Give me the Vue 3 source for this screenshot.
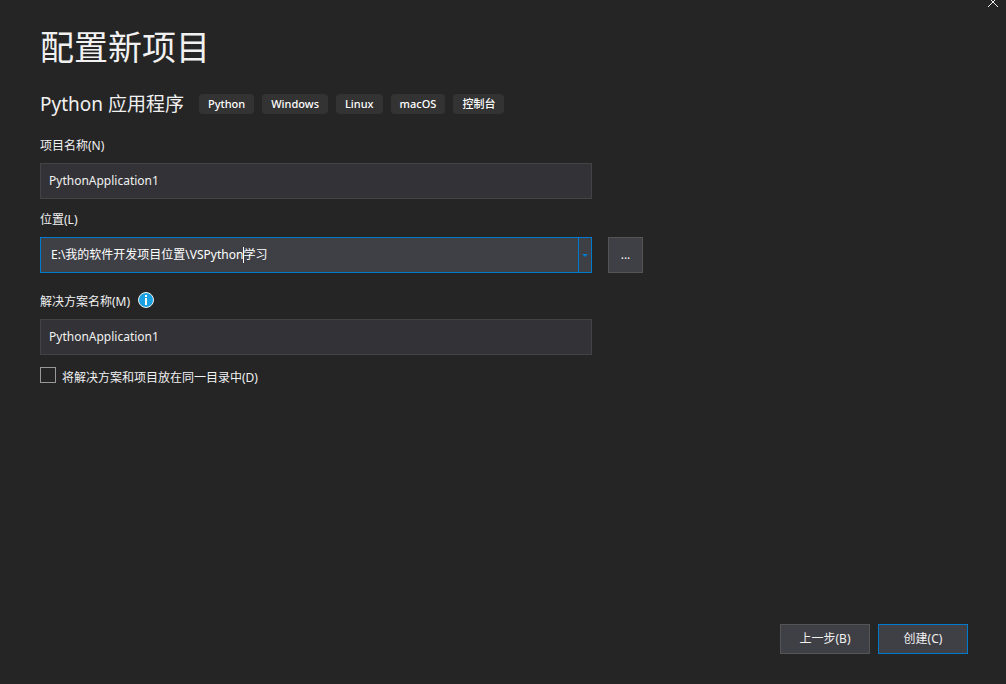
<template>
  <div class="dialog">
    <button class="close-button" type="button" aria-label="关闭">
      <svg width="12" height="12" viewBox="0 0 12 12">
        <path d="M1 1 L11 11 M11 1 L1 11" />
      </svg>
    </button>

    <header>
      <h1>配置新项目</h1>
      <div class="template-info">
        <h2>Python 应用程序</h2>
        <ul class="tags">
          <li v-for="tag in tags" :key="tag" class="tag">{{ tag }}</li>
        </ul>
      </div>
    </header>

    <form id="project-form" class="project-form" @submit.prevent>
      <div class="field">
        <label for="project-name">项目名称(N)</label>
        <input id="project-name" v-model="projectName" class="text-box" type="text" />
      </div>

      <div class="field">
        <label for="location">位置(L)</label>
        <div class="location-row">
          <div class="combo-box">
            <input
              id="location"
              ref="locationInput"
              v-model="location"
              type="text"
              spellcheck="false"
              @input="updateCaret"
              @click="updateCaret"
              @keyup="updateCaret"
              @focus="caretVisible = true"
              @blur="caretVisible = false"
            />
            <span v-show="caretVisible" class="caret" :style="{ left: caretLeft + 'px' }"></span>
            <button class="combo-toggle" type="button" aria-label="最近的位置">
              <svg width="6" height="3" viewBox="0 0 6 3">
                <path d="M0 0 H6 L3 3 Z" />
              </svg>
            </button>
          </div>
          <button class="browse-button" type="button">...</button>
        </div>
      </div>

      <div class="field solution-field">
        <div class="label-row">
          <label for="solution-name">解决方案名称(M)</label>
          <svg class="info-icon" width="16" height="16" viewBox="0 0 16 16">
            <circle cx="8" cy="8" r="7.5" />
            <path d="M7 3 H9 V5 H7 Z M7 6 H9 V13 H7 Z" />
          </svg>
        </div>
        <input id="solution-name" v-model="solutionName" class="text-box" type="text" />
      </div>

      <label class="check-row">
        <input v-model="sameDirectory" type="checkbox" />
        <span>将解决方案和项目放在同一目录中(D)</span>
      </label>
    </form>

    <footer class="actions">
      <button class="action-button" type="button">上一步(B)</button>
      <button class="action-button primary" type="submit" form="project-form">创建(C)</button>
    </footer>
  </div>
</template>

<script setup>
import { ref, onMounted } from 'vue'

const tags = ['Python', 'Windows', 'Linux', 'macOS', '控制台']

const projectName = ref('PythonApplication1')
const location = ref('E:\\我的软件开发项目位置\\VSPython学习')
const solutionName = ref('PythonApplication1')
const sameDirectory = ref(false)
const locationInput = ref(null)
const caretVisible = ref(true)
const caretLeft = ref(0)

// 根据光标前的文字宽度计算光标位置
const updateCaret = () => {
  const input = locationInput.value
  const style = getComputedStyle(input)
  const context = document.createElement('canvas').getContext('2d')
  context.font = `${style.fontSize} ${style.fontFamily}`
  const before = input.value.slice(0, input.selectionStart)
  caretLeft.value = Math.round(parseInt(style.paddingLeft) + context.measureText(before).width)
}

onMounted(() => {
  const position = location.value.indexOf('学习')
  locationInput.value.focus()
  locationInput.value.setSelectionRange(position, position)
  updateCaret()
})
</script>

<style>
body {
  background: #252526;
}
</style>

<style scoped>
.dialog {
  position: relative;
  display: flex;
  flex-direction: column;
  box-sizing: border-box;
  min-height: 100vh;
  padding: 23px 38px 30px 40px;
  overflow: hidden;
  background: #252526;
  color: #f1f1f1;
  font-family: "Noto Sans", "Noto Sans CJK SC", sans-serif;
  font-size: 12px;
  line-height: 20px;
}

input,
button {
  box-sizing: border-box;
  margin: 0;
  font: inherit;
  color: inherit;
  outline: none;
}

.close-button {
  position: absolute;
  top: -4px;
  right: 7px;
  display: flex;
  padding: 0;
  border: none;
  background: none;
}

.close-button path {
  stroke: #f1f1f1;
  fill: none;
}

h1 {
  margin: 0 0 19px;
  font-size: 34px;
  font-weight: 400;
  line-height: 48px;
}

.template-info {
  display: flex;
  align-items: center;
  gap: 15px;
}

h2 {
  margin: 0;
  font-size: 19px;
  font-weight: 400;
  line-height: 28px;
}

.tags {
  display: flex;
  gap: 8px;
  margin: 0;
  padding: 0;
  list-style: none;
}

.tag {
  padding: 0 9px;
  border-radius: 4px;
  background: #333334;
  color: #ffffff;
  font-size: 11px;
  font-weight: 500;
}

.project-form {
  display: flex;
  flex-direction: column;
  gap: 11px;
  margin-top: 18px;
}

.field {
  display: flex;
  flex-direction: column;
  gap: 7px;
}

.solution-field {
  margin-top: 8px;
}

.label-row {
  display: flex;
  align-items: flex-start;
  gap: 8px;
}

.info-icon circle {
  fill: #1ba1e2;
  stroke: #f1f1f1;
}

.info-icon path {
  fill: #ffffff;
}

.text-box {
  width: 100%;
  max-width: 552px;
  height: 36px;
  padding: 0 8px 2px;
  border: 1px solid #434346;
  background: #333337;
}

.location-row {
  display: flex;
  gap: 16px;
}

.combo-box {
  position: relative;
  display: flex;
  flex: 0 1 552px;
  box-sizing: border-box;
  height: 36px;
  border: 1px solid #007acc;
  background: #3f3f46;
}

.combo-box input {
  flex: 1;
  min-width: 0;
  padding: 0 10px;
  border: none;
  background: none;
  color: #ffffff;
  caret-color: transparent;
}

.caret {
  position: absolute;
  top: 9px;
  bottom: 9px;
  width: 1px;
  background: #ffffff;
  pointer-events: none;
}

.combo-toggle {
  display: flex;
  align-items: center;
  justify-content: center;
  width: 13px;
  padding: 0;
  border: none;
  border-left: 1px solid #007acc;
  background: none;
}

.combo-toggle path {
  fill: #007acc;
}

.browse-button,
.action-button {
  padding: 0;
  border: 1px solid #555555;
  background: #3f3f46;
}

.browse-button {
  width: 35px;
  height: 36px;
}

.check-row {
  display: flex;
  align-items: flex-start;
  align-self: flex-start;
  gap: 6px;
  margin-top: 1px;
  line-height: 22px;
}

.check-row input {
  width: 16px;
  height: 16px;
  border: 1px solid #999999;
  background: #252526;
  appearance: none;
}

.check-row input:checked {
  background: #007acc;
}

.actions {
  display: flex;
  justify-content: flex-end;
  gap: 8px;
  margin-top: auto;
}

.action-button {
  width: 90px;
  height: 30px;
}

.action-button.primary {
  border-color: #007acc;
}
</style>
